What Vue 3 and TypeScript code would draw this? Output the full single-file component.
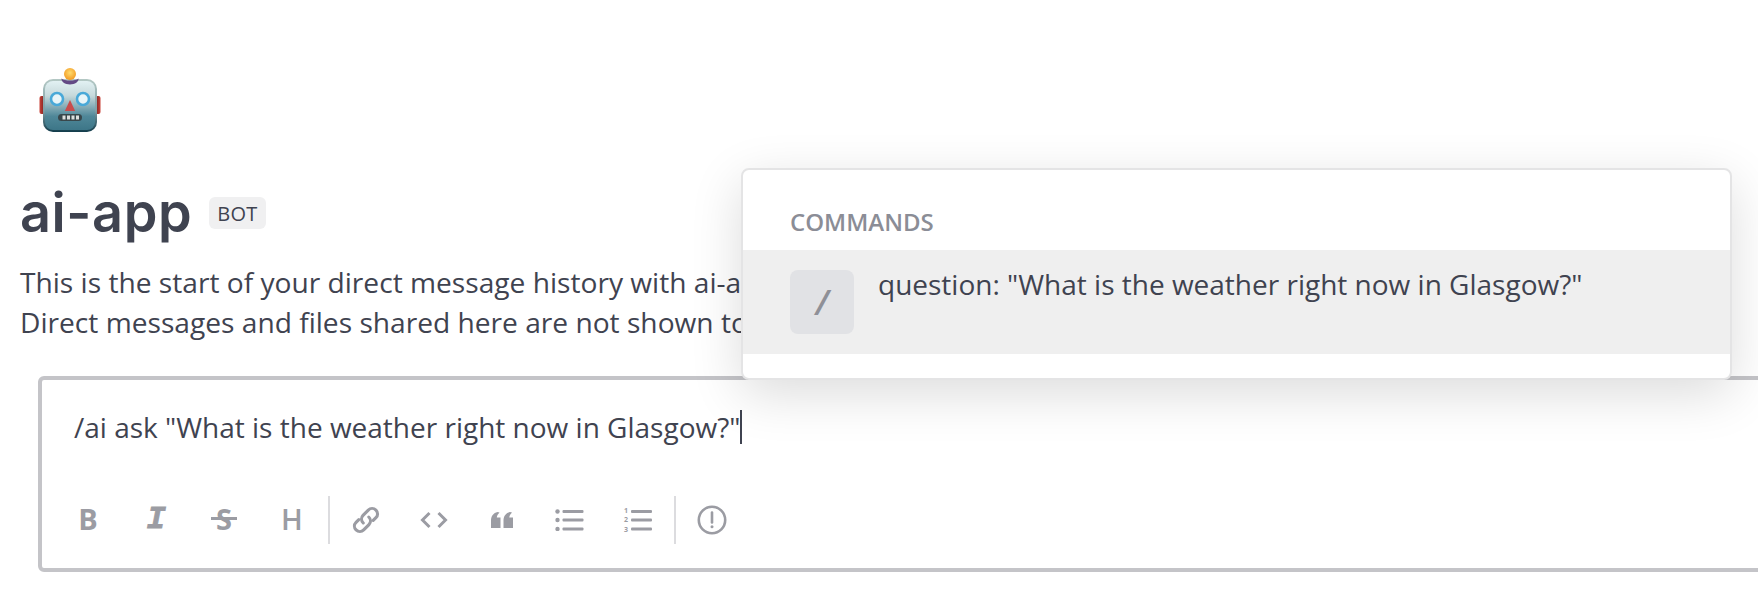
<script setup lang="ts">
const command = 'question: "What is the weather right now in Glasgow?"'
const draft = '/ai ask "What is the weather right now in Glasgow?"'
</script>

<template>
  <main class="page">
    <svg class="avatar" viewBox="0 0 64 64" width="64" height="64" aria-label="robot">
      <defs>
        <linearGradient id="face" x1="0" y1="0" x2="0" y2="1">
          <stop offset="0" stop-color="#e2f1f3" />
          <stop offset="0.3" stop-color="#c6d9db" />
          <stop offset="0.72" stop-color="#4f8798" />
          <stop offset="1" stop-color="#3d7688" />
        </linearGradient>
        <linearGradient id="rim" x1="0" y1="0" x2="0" y2="1">
          <stop offset="0" stop-color="#b4c8c4" />
          <stop offset="0.6" stop-color="#7d9fa6" />
          <stop offset="1" stop-color="#123c4b" />
        </linearGradient>
        <linearGradient id="ear" x1="0" y1="0" x2="1" y2="0">
          <stop offset="0" stop-color="#c9443a" />
          <stop offset="1" stop-color="#7a1d1b" />
        </linearGradient>
        <linearGradient id="ear2" x1="1" y1="0" x2="0" y2="0">
          <stop offset="0" stop-color="#c9443a" />
          <stop offset="1" stop-color="#7a1d1b" />
        </linearGradient>
        <radialGradient id="bulb" cx="0.5" cy="0.4" r="0.6">
          <stop offset="0" stop-color="#ffdc6e" />
          <stop offset="1" stop-color="#f29a24" />
        </radialGradient>
      </defs>
      <rect x="1.500" y="28" width="5" height="18" rx="2" fill="url(#ear)" />
      <rect x="57.500" y="28" width="5" height="18" rx="2" fill="url(#ear2)" />
      <rect x="5" y="11" width="54" height="53" rx="10" fill="url(#rim)" />
      <rect x="7" y="13" width="50" height="49" rx="8" fill="url(#face)" />
      <circle cx="32" cy="6" r="6" fill="url(#bulb)" />
      <path d="M23.500 10.500c1.500 1.500 5 2 8.500 2s7-.5 8.500-2c.5 3-3.500 6-8.500 6s-9-3-8.500-6z" fill="#634a85" />
      <circle cx="19" cy="31" r="6" fill="#e8f5f8" stroke="#49a9d8" stroke-width="2.600" />
      <circle cx="45" cy="31" r="6" fill="#e8f5f8" stroke="#49a9d8" stroke-width="2.600" />
      <path d="M32 32l5.200 11H26.800z" fill="#c94c4c" />
      <rect x="20" y="46" width="24" height="7" rx="3.500" fill="#39474b" />
      <path d="M24.500 47.500h3v4h-3zM29 47.500h3v4h-3zM33.500 47.500h3v4h-3zM38 47.500h3v4h-3z" fill="#dcdfdd" />
    </svg>

    <div class="title-row">
      <h1 class="title">ai-app</h1>
      <span class="badge">BOT</span>
    </div>

    <p class="intro">This is the start of your direct message history with ai-app.</p>
    <p class="intro">Direct messages and files shared here are not shown to anyone else.</p>

    <section class="composer">
      <div class="draft">{{ draft }}<span class="caret"></span></div>
      <div class="toolbar">
        <span class="tool"><span class="glyph bold">B</span></span>
        <span class="tool"><span class="glyph slab">I</span></span>
        <span class="tool"><span class="glyph strike">S</span></span>
        <span class="tool"><span class="glyph head">H</span></span>
        <span class="sep"></span>
        <span class="tool">
          <svg viewBox="0 0 28 28" width="32" height="32" fill="none" stroke="#9b9ca3" stroke-width="2.700" stroke-linecap="round">
            <path d="M11.600 16.600c-2-2-2-4.700-.2-6.600l4.600-4.700c1.900-1.900 4.800-1.900 6.700 0s1.900 4.800 0 6.700l-2.400 2.400" />
            <path d="M16.400 11.400c2 2 2 4.700.2 6.600L12 22.700c-1.900 1.900-4.800 1.900-6.700 0s-1.900-4.800 0-6.700l2.400-2.400" />
          </svg>
        </span>
        <span class="tool">
          <svg viewBox="0 0 30 20" width="30" height="20" fill="none" stroke="#9b9ca3" stroke-width="3">
            <path d="M10.500 3L3.500 10l7 7M19.500 3l7 7-7 7" />
          </svg>
        </span>
        <span class="tool">
          <svg viewBox="0 0 22 16" width="22" height="16" fill="#9b9ca3">
            <path d="M0 8.500C0 4 2.500 1 6.500 0l2 .5C7 2 6 3.500 5.800 5.500H9.500V16H0zM12.500 8.500C12.500 4 15 1 19 0l2 .5C19.500 2 18.500 3.500 18.300 5.500H22V16h-9.500z" />
          </svg>
        </span>
        <span class="tool">
          <svg viewBox="0 0 30 22" width="30" height="22" fill="#9b9ca3">
            <circle cx="2.500" cy="2.500" r="2.200" /><circle cx="2.500" cy="11" r="2.200" /><circle cx="2.500" cy="20" r="2.200" />
            <rect x="7.500" y="1" width="21" height="3" rx="1" /><rect x="7.500" y="9.500" width="21" height="3" rx="1" /><rect x="7.500" y="18.500" width="21" height="3" rx="1" />
          </svg>
        </span>
        <span class="tool ol">
          <span class="nums"><span>1</span><span>2</span><span>3</span></span>
          <svg viewBox="0 0 21 22" width="21" height="22" fill="#9b9ca3">
            <rect x="0" y="1" width="21" height="3" rx="1" /><rect x="0" y="9.500" width="21" height="3" rx="1" /><rect x="0" y="18.500" width="21" height="3" rx="1" />
          </svg>
        </span>
        <span class="sep"></span>
        <span class="tool">
          <svg viewBox="0 0 30 30" width="30" height="30" fill="none" stroke="#9b9ca3">
            <circle cx="15" cy="15" r="13.200" stroke-width="2.600" />
            <path d="M15 7.500v10" stroke-width="2.600" stroke-linecap="round" />
            <circle cx="15" cy="21.800" r="1.500" fill="#9b9ca3" stroke="none" />
          </svg>
        </span>
      </div>
    </section>

    <aside class="popup">
      <div class="popup-head">COMMANDS</div>
      <div class="popup-row">
        <span class="slash">/</span>
        <span class="command">{{ command }}</span>
      </div>
    </aside>
  </main>
</template>

<style>
html, body { margin: 0; background: #fff; overflow: hidden; }
</style>

<style scoped>
.page {
  position: relative;
  width: 1758px;
  height: 600px;
  overflow: hidden;
  box-sizing: border-box;
  padding: 68px 0 0 20px;
  background: #fff;
  color: #3f4350;
  font-family: "Open Sans", "Liberation Sans", sans-serif;
}
.avatar { display: block; margin-left: 18px; }
.title-row { display: flex; align-items: center; gap: 17px; margin-top: 43px; height: 76px; }
.title {
  margin: 0;
  font-family: Inter, "Noto Sans", sans-serif;
  font-size: 54px;
  font-weight: 600;
  letter-spacing: 0.600px;
  line-height: 76px;
}
.badge {
  display: flex;
  align-items: center;
  height: 32px;
  padding: 0 8px;
  border-radius: 6px;
  background: #f0f0f1;
  font-size: 20px;
  font-weight: 500;
  letter-spacing: 0.3px;
}
.intro { margin: 0; font-size: 28.150px; line-height: 40px; white-space: nowrap; }
.intro:first-of-type { margin-top: 11px; }
.composer {
  box-sizing: border-box;
  width: 1800px;
  height: 196px;
  margin: 34px 0 0 18px;
  border: 4px solid #c4c4c8;
  border-radius: 6px;
  padding: 27px 0 0 12px;
}
.draft { display: flex; align-items: center; padding-left: 20px; font-size: 28px; line-height: 40px; white-space: pre; }
.caret { width: 2px; height: 34px; background: #3f4350; }
.toolbar { display: flex; align-items: center; margin-top: 49px; height: 48px; }
.tool { display: flex; align-items: center; justify-content: center; flex: none; width: 68px; height: 48px; color: #9b9ca3; }
.sep { flex: none; width: 2px; height: 48px; margin: 0 2px; background: #dcdcdf; }
.glyph { line-height: 1; margin-top: -4px; }
.bold { font-size: 29px; font-weight: 700; }
.slab { font-family: "Liberation Mono", monospace; font-size: 32px; font-weight: 700; font-style: italic; margin-top: 0; -webkit-text-stroke: 0.8px #9b9ca3; }
.strike { position: relative; font-size: 29px; font-weight: 700; }
.strike::after { content: ""; position: absolute; left: -5px; right: -5px; top: 13px; height: 3px; background: #9b9ca3; }
.head { font-size: 29px; font-weight: 600; }
.ol { gap: 3px; }
.nums { display: flex; flex-direction: column; font-size: 7px; font-weight: 700; }
.nums span { display: block; height: 9.600px; line-height: 9.600px; }
.popup {
  position: absolute;
  left: 741px;
  top: 168px;
  box-sizing: border-box;
  width: 991px;
  height: 212px;
  border: 2px solid #e4e4e5;
  border-radius: 8px;
  background: #fff;
  box-shadow: 0 14px 52px rgba(0, 0, 0, 0.14);
}
.popup-head { height: 80px; padding: 37px 0 0 47px; box-sizing: border-box; font-size: 24px; line-height: 30px; font-weight: 600; color: #8b8d96; }
.popup-row { display: flex; gap: 24px; height: 104px; padding: 16px 0 0 47px; box-sizing: border-box; background: #efefef; }
.slash {
  display: flex; align-items: center; justify-content: center;
  width: 64px; height: 64px; margin-top: 4px; border-radius: 8px;
  background: #e1e2e5; color: #8f9097; font-size: 34px; font-weight: 600; font-style: italic;
}
.command { font-size: 28px; line-height: 36px; white-space: nowrap; }
</style>
